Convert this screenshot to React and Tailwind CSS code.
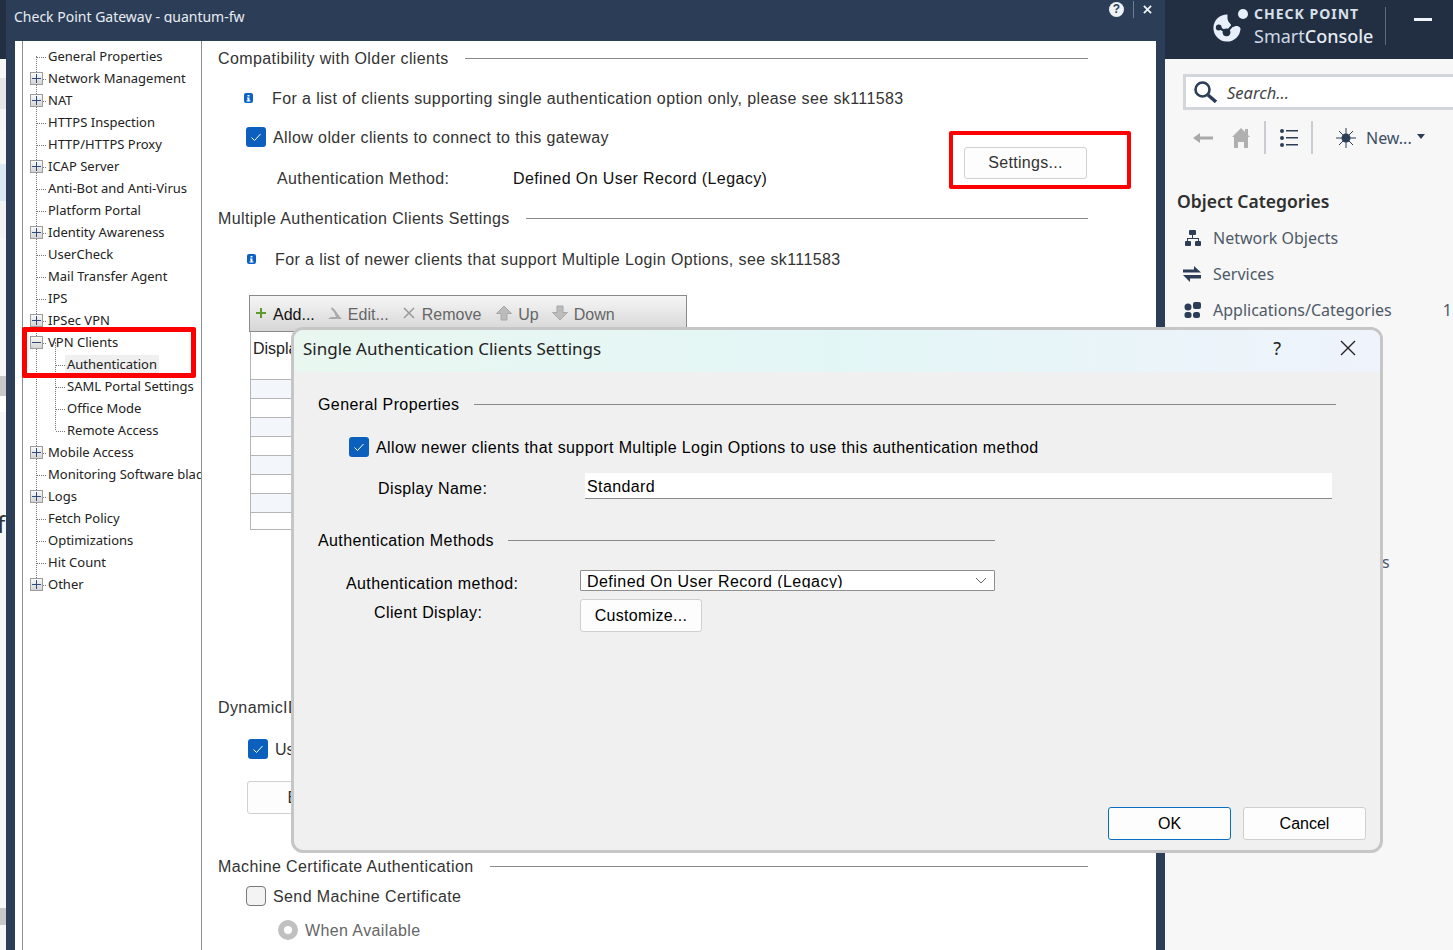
import React from 'react';

const ui = { fontFamily: '"Liberation Sans", Arial, sans-serif' };
const segoe = { fontFamily: '"Noto Sans", sans-serif' };

const treeItems = [
  { label: 'General Properties' },
  { label: 'Network Management', box: 'plus' },
  { label: 'NAT', box: 'plus' },
  { label: 'HTTPS Inspection' },
  { label: 'HTTP/HTTPS Proxy' },
  { label: 'ICAP Server', box: 'plus' },
  { label: 'Anti-Bot and Anti-Virus' },
  { label: 'Platform Portal' },
  { label: 'Identity Awareness', box: 'plus' },
  { label: 'UserCheck' },
  { label: 'Mail Transfer Agent' },
  { label: 'IPS' },
  { label: 'IPSec VPN', box: 'plus' },
  { label: 'VPN Clients', box: 'minus' },
  { label: 'Authentication', child: true, selected: true },
  { label: 'SAML Portal Settings', child: true },
  { label: 'Office Mode', child: true },
  { label: 'Remote Access', child: true },
  { label: 'Mobile Access', box: 'plus' },
  { label: 'Monitoring Software blade' },
  { label: 'Logs', box: 'plus' },
  { label: 'Fetch Policy' },
  { label: 'Optimizations' },
  { label: 'Hit Count' },
  { label: 'Other', box: 'plus' },
];

const Check = () => (
  <svg viewBox="0 0 20 20" className="w-5 h-5">
    <path d="M5.5 10.5l3 3 6-6.5" fill="none" stroke="#fff" strokeWidth="1" />
  </svg>
);

const Checkbox = ({ className = '' }) => (
  <div className={`w-5 h-5 shrink-0 rounded-[3px] bg-[#0b5fbd] ${className}`}>
    <Check />
  </div>
);

const InfoIcon = () => (
  <svg viewBox="0 0 9 10" className="w-[9px] h-[10px] shrink-0">
    <rect width="9" height="10" rx="2" fill="#0b62c4" />
    <path d="M3.500 2h2v1.500h-2zM3 4.500h2.500v3H6.500V8.500h-4V7.500H3.500V5.500H3z" fill="#fff" />
  </svg>
);

const Heading = ({ children, gap = 'gap-[16px]', color = 'text-[#333]' }) => (
  <div className={`flex items-center h-6 ${gap} text-[16px] tracking-[0.4px] whitespace-nowrap ${color}`}>
    <span className="pt-[2px]">{children}</span>
    <div className="flex-1 h-px bg-[#8a8a8a]" />
  </div>
);

const Expander = ({ type }) => (
  <div className="absolute left-[7px] top-[4px] w-[13px] h-[13px] border border-[#9c9c9c] bg-gradient-to-b from-[#fafafa] to-[#d4d4d4] flex items-center justify-center">
    <div className="relative w-[9px] h-[9px]">
      <div className="absolute left-0 top-[4px] w-[9px] h-px bg-[#2f4a7a]" />
      {type === 'plus' && <div className="absolute left-[4px] top-0 h-[9px] w-px bg-[#2f4a7a]" />}
    </div>
  </div>
);

const Tree = () => (
  <div className="relative w-[180px] shrink-0 overflow-hidden border-r border-[#8f8f8f] ml-[7px] pt-[5px] border-l border-l-[#8f8f8f]" style={segoe}>
    <div className="absolute left-[13px] top-[15px] h-[528px] border-l border-dotted border-[#777]" />
    <div className="absolute left-[32px] top-[301px] h-[88px] border-l border-dotted border-[#777]" />
    {treeItems.map((it) => (
      <div key={it.label} className="relative h-[22px] flex items-center text-[13px] text-[#222] whitespace-nowrap">
        <div className={`shrink-0 border-t border-dotted border-[#777] ${it.child ? 'ml-[33px] w-[9px]' : 'ml-[14px] w-[9px]'}`} />
        <span className={`${it.selected ? 'bg-[#f0f0f0] px-[2px]' : 'ml-[2px]'}`}>{it.label}</span>
        {it.box && <Expander type={it.box} />}
      </div>
    ))}
  </div>
);

const ToolIcon = ({ children, className = '' }) => (
  <svg viewBox="0 0 16 16" className={`w-4 h-4 shrink-0 ${className}`}>{children}</svg>
);

const TableToolbar = () => (
  <div className="w-[438px] h-[37px] ml-[31px] border border-[#8a8a8a] bg-gradient-to-b from-[#f6f6f6] to-[#d6d6d6] flex items-start pt-[7px] pl-[4px] text-[16px] text-[#666] whitespace-nowrap">
    <ToolIcon className="mt-[2px] -ml-px"><path d="M8 3v10M3 8h10" stroke="#5f9a2d" strokeWidth="2" /></ToolIcon>
    <span className="ml-[4px] text-[#111]">Add...</span>
    <ToolIcon className="ml-[12px] mt-[2px]"><path d="M1 14h14l-2-2-5-7-3-3-1 2 3 3 2 5H4z" fill="#aaa" /></ToolIcon>
    <span className="ml-[5px]">Edit...</span>
    <ToolIcon className="ml-[12px] mt-[2px]"><path d="M3 3l10 10M13 3L3 13" stroke="#999" strokeWidth="1.5" /></ToolIcon>
    <span className="ml-[5px]">Remove</span>
    <ToolIcon className="ml-[15px] mt-[2px]"><path d="M8 1l7.500 7.500H11V15H5V8.500H.5z" fill="#bcbcbc" stroke="#a8a8a8" /></ToolIcon>
    <span className="ml-[6px]">Up</span>
    <ToolIcon className="ml-[13px] mt-[2px]"><path d="M8 15L.5 7.500H5V1h6v6.500h4.500z" fill="#bcbcbc" stroke="#a8a8a8" /></ToolIcon>
    <span className="ml-[6px]">Down</span>
  </div>
);

const ClientTable = () => (
  <div className="w-[437px] ml-[32px] border border-t-0 border-[#b5b5b5] text-[16px] text-[#222]">
    <div className="h-[48px] pl-[2px] pt-[5px] border-b border-[#b5b5b5]">Display Name</div>
    {[0, 1, 2, 3, 4, 5, 6, 7].map((i) => (
      <div key={i} className={`border-b last:border-b-0 border-[#b5b5b5] ${i === 7 ? 'h-[16px]' : 'h-[19px]'} ${i % 2 === 0 ? 'bg-[#f3f7fc]' : 'bg-white'}`} />
    ))}
  </div>
);

const MainPanel = () => (
  <div className="flex-1 pt-[5px] pl-4 min-w-0 overflow-hidden" style={ui}>
    <div className="w-[870px]">
      <Heading>Compatibility with Older clients</Heading>
    </div>
    <div className="flex items-center h-6 mt-4 ml-[26px] text-[16px] text-[#333] tracking-[0.4px] whitespace-nowrap">
      <InfoIcon />
      <span className="ml-[19px] pt-[2px]">For a list of clients supporting single authentication option only, please see sk111583</span>
    </div>
    <div className="w-[870px] flex justify-between mt-[15px]">
      <div>
        <div className="flex items-center h-6 ml-[28px] text-[16px] text-[#333] tracking-[0.4px]">
          <Checkbox />
          <span className="ml-[7px] pt-[2px]">Allow older clients to connect to this gateway</span>
        </div>
        <div className="flex items-center h-6 mt-[17px] ml-[59px] text-[16px] tracking-[0.4px]">
          <span className="w-[236px] pt-[2px] text-[#333]">Authentication Method:</span>
          <span className="pt-[2px] text-[#111]">Defined On User Record (Legacy)</span>
        </div>
      </div>
      <div className="w-[123px] h-[32px] mt-[22px] mr-[1px] rounded-[3px] border border-[#d0d0d0] bg-[#fdfdfd] flex items-center justify-center text-[16px] text-[#333] tracking-[0.3px]">
        Settings...
      </div>
    </div>
    <div className="w-[870px] mt-4">
      <Heading>Multiple Authentication Clients Settings</Heading>
    </div>
    <div className="flex items-center h-6 mt-[17px] ml-[29px] text-[16px] text-[#333] tracking-[0.4px] whitespace-nowrap">
      <InfoIcon />
      <span className="ml-[19px] pt-[2px]">For a list of newer clients that support Multiple Login Options, see sk111583</span>
    </div>
    <div className="mt-6">
      <TableToolbar />
      <ClientTable />
    </div>
    <div className="w-[870px] mt-[165px]">
      <Heading>DynamicID Settings</Heading>
    </div>
    <div className="flex items-center h-6 mt-[18px] ml-[30px] text-[16px] text-[#333]">
      <Checkbox />
      <span className="ml-[7px] pt-[2px]">Use</span>
    </div>
    <div className="w-[122px] h-[33px] mt-[20px] ml-[29px] rounded-[3px] border border-[#d0d0d0] bg-[#fdfdfd] flex items-center justify-center text-[16px] text-[#333]">
      Edit...
    </div>
    <div className="w-[870px] mt-10">
      <Heading>Machine Certificate Authentication</Heading>
    </div>
    <div className="flex items-center h-6 mt-[6px] ml-[28px] text-[16px] text-[#333] tracking-[0.4px]">
      <div className="w-5 h-5 rounded-[4px] border border-[#777] bg-[#f3f3f3]" />
      <span className="ml-[7px] pt-[2px]">Send Machine Certificate</span>
    </div>
    <div className="flex items-center h-6 mt-[10px] ml-[60px] text-[16px] text-[#666] tracking-[0.4px]">
      <div className="w-5 h-5 rounded-full border-[6px] border-[#c0c0c0] bg-white" />
      <span className="ml-[7px] pt-[2px]">When Available</span>
    </div>
  </div>
);

const GatewayWindow = () => (
  <div className="w-[1159px] shrink-0 h-full flex flex-col bg-[#2c3e57]">
    <div className="h-[41px] shrink-0 relative">
      <div className="ml-2 pt-[8px] h-[23px] overflow-hidden text-[14px] leading-[18px] text-[#e8edf3]" style={segoe}>
        Check Point Gateway - quantum-fw
      </div>
      <div className="absolute right-[13px] top-0 flex items-center h-[19px]">
        <div className="w-[15px] h-[15px] rounded-full bg-[#eef2f7] text-[#2c3e57] text-[12px] font-bold leading-[15px] text-center" style={ui}>?</div>
        <div className="w-px h-[17px] bg-[#6d7d92] ml-[9px]" />
        <svg viewBox="0 0 10 10" className="w-[9px] h-[9px] ml-[9px]"><path d="M1 1l8 8M9 1L1 9" stroke="#eef2f7" strokeWidth="2" /></svg>
      </div>
    </div>
    <div className="flex-1 min-h-0 flex bg-white ml-[9px] mr-[9px]">
      <Tree />
      <MainPanel />
    </div>
  </div>
);

const Logo = () => (
  <svg viewBox="0 0 32 32" className="w-[31px] h-[31px] shrink-0 mt-[12px]">
    <path d="M17 2.5A14 14 0 1 0 30.5 17c-1-2-2.500-2.500-5-2.500-3.500 0-8-3-8.500-8 0-1.500 0-3 0-4z" fill="#e6effa" />
    <path d="M8 16l8 5 7-8" fill="none" stroke="#222f43" strokeWidth="2.400" />
    <circle cx="8" cy="16" r="3" fill="#222f43" />
    <circle cx="16" cy="21" r="4" fill="#222f43" />
    <circle cx="23" cy="13" r="2.500" fill="#222f43" />
  </svg>
);

const categories = [
  {
    label: 'Network Objects',
    icon: <g fill="#2c3e57"><rect x="6" y="1" width="7" height="5" rx="1" /><rect x="2" y="12" width="6" height="5" rx="1" /><rect x="12" y="12" width="6" height="5" rx="1" /><path d="M9 6h1v3h6v3h-1v-2H5v2H4V9h5z" /></g>,
  },
  {
    label: 'Services',
    icon: <g fill="#2c3e57"><path d="M0 4.500h11V1l7 6.500H0zM18 10H0l7 7v-3.500h11z" /></g>,
  },
  {
    label: 'Applications/Categories',
    icon: <g fill="#2c3e57"><circle cx="5" cy="6" r="3.500" /><rect x="10" y="1" width="8" height="7" rx="2" /><rect x="1.500" y="11" width="7" height="6" rx="2.500" /><rect x="10" y="11" width="7" height="6" rx="2.500" /></g>,
  },
];

const SmartConsole = () => (
  <div className="flex-1 min-w-0 h-full flex flex-col bg-[#f7f7f7] overflow-hidden" style={segoe}>
    <div className="h-[59px] shrink-0 bg-[#222f43] flex items-start pl-[46px]">
      <Logo />
      <div className="relative w-[132px] ml-[12px] shrink-0 border-r border-[#5b6a7e] mt-[7px] h-[38px] pr-[11px]">
        <div className="absolute left-[-16px] top-[2px] w-[10px] h-[10px] rounded-full bg-[#e6effa]" />
        <div className="-mt-px text-[14px] font-bold tracking-[1px] leading-[15px] text-[#d8e0ea] whitespace-nowrap">CHECK POINT</div>
        <div className="text-[18px] leading-[30px] text-[#cfd8e3] whitespace-nowrap">Smart<span className="font-medium text-[#e6ebf2]">Console</span></div>
      </div>
      <div className="w-[18px] h-[2.500px] bg-[#f0f3f7] ml-[28px] mt-[18px]" />
    </div>
    <div className="ml-[18px] mt-[15px] h-[36px] w-[300px] border-[3px] border-[#d3d7dc] bg-white flex items-center pl-[7px] shrink-0">
      <svg viewBox="0 0 24 24" className="w-[24px] h-[24px]"><circle cx="9.500" cy="9.500" r="7" fill="none" stroke="#2c3e57" strokeWidth="2.600" /><path d="M15 15l8 7" stroke="#2c3e57" strokeWidth="3.400" /></svg>
      <span className="ml-[10px] pt-[2px] italic text-[16.500px] text-[#444]">Search...</span>
    </div>
    <div className="flex items-center h-[33px] mt-[11px] ml-[28px] shrink-0">
      <svg viewBox="0 0 20 14" className="w-5 h-[14px]"><path d="M0 7l7-5v3.500h13v3H7V12z" fill="#a9a9a9" /></svg>
      <svg viewBox="0 0 18 20" className="w-[18px] h-5 ml-[19px]"><path d="M9 0l4 4V1h3v6l2 2h-2v11h-4v-6H6v6H2V9H0z" fill="#b0b0b0" /></svg>
      <div className="w-[2px] h-[33px] bg-[#c9cdd2] ml-[14px]" />
      <svg viewBox="0 0 18 18" className="w-[18px] h-[18px] ml-[14px]"><g fill="#2c3e57"><circle cx="2" cy="2" r="2" /><circle cx="2" cy="9" r="2" /><circle cx="2" cy="16" r="2" /><rect x="6" y="1" width="12" height="1.500" /><rect x="6" y="8" width="12" height="1.500" /><rect x="6" y="15" width="12" height="1.500" /></g></svg>
      <div className="w-[2px] h-[33px] bg-[#c9cdd2] ml-[13px]" />
      <svg viewBox="0 0 20 20" className="w-5 h-5 ml-[23px]"><circle cx="10" cy="10" r="4.500" fill="#2c3e57" /><path d="M10 0v20M0 10h20M3 3l14 14M17 3L3 17" stroke="#2c3e57" strokeWidth="1" /></svg>
      <span className="ml-[10px] text-[16px] text-[#3d4f66]">New...</span>
      <svg viewBox="0 0 8 5" className="w-2 h-[5px] ml-[5px] mb-[3px]"><path d="M0 0h8L4 5z" fill="#2c3e57" /></svg>
    </div>
    <div className="ml-[12px] mt-[35px] text-[17.500px] leading-6 font-semibold text-[#2f2f2f] whitespace-nowrap shrink-0">Object Categories</div>
    <div className="ml-[18px] mt-[7px] flex flex-col shrink-0">
      {categories.map((c) => (
        <div key={c.label} className="h-[36px] flex items-center whitespace-nowrap">
          <svg viewBox="0 0 19 18" className="w-[19px] h-[18px] shrink-0">{c.icon}</svg>
          <span className="ml-[11px] text-[16px] text-[#4e5a68]">{c.label}</span>
        </div>
      ))}
    </div>
  </div>
);

const DialogButton = ({ children, primary }) => (
  <div className={`w-[123px] h-[33px] rounded-[3px] border bg-[#fdfdfd] flex items-center justify-center text-[16px] text-black ${primary ? 'border-[#0a6fc2]' : 'border-[#cfcfcf]'}`}>
    {children}
  </div>
);

const Dialog = () => (
  <div className="absolute left-[291px] top-[327px] w-[1092px] h-[526px] rounded-[12px] border-[3px] border-[#c6c6c6] bg-[#f0f0f0] flex flex-col overflow-hidden" style={ui}>
    <div className="h-[42px] shrink-0 flex items-center pl-[9px] bg-gradient-to-r from-[#e9f7f0] via-[#e3f6f6] to-[#eff3fb]">
      <span className="pb-[4px] text-[17px] text-[#222]" style={segoe}>Single Authentication Clients Settings</span>
      <span className="ml-auto pb-[6px] text-[18px] text-[#222]" style={segoe}>?</span>
      <svg viewBox="0 0 16 16" className="w-4 h-4 ml-[59px] mr-[24px] mb-[6px]"><path d="M1 1l14 14M15 1L1 15" stroke="#222" strokeWidth="1.400" /></svg>
    </div>
    <div className="flex-1 min-h-0 flex flex-col pl-6 text-[16px] text-black">
      <div className="w-[1018px] mt-5">
        <Heading gap="gap-[14px]" color="text-black">General Properties</Heading>
      </div>
      <div className="flex items-center h-6 mt-[19px] ml-[31px] tracking-[0.4px] whitespace-nowrap">
        <Checkbox />
        <span className="ml-[7px] pt-[2px]">Allow newer clients that support Multiple Login Options to use this authentication method</span>
      </div>
      <div className="flex items-center h-[26px] mt-[14px] ml-[60px] tracking-[0.4px]">
        <span className="w-[207px] pt-[6px]">Display Name:</span>
        <div className="w-[747px] h-[26px] bg-white border-b border-[#8a8a8a] pl-[2px] leading-[28px]">Standard</div>
      </div>
      <div className="w-[677px] mt-[29px]">
        <Heading gap="gap-[14px]" color="text-black">Authentication Methods</Heading>
      </div>
      <div className="flex items-center h-[21px] mt-[18px] ml-[28px] tracking-[0.4px]">
        <span className="w-[234px] pt-[7px]">Authentication method:</span>
        <div className="relative w-[415px] h-[21px] rounded-[1px] border border-[#8f8f8f] bg-white pl-[6px]">
          <div className="h-[17px] overflow-hidden leading-[21px] tracking-[0.46px]">Defined On User Record (Legacy)</div>
          <svg viewBox="0 0 12 7" className="absolute right-[7px] top-[6px] w-3 h-[7px]"><path d="M1 1l5 5 5-5" fill="none" stroke="#666" strokeWidth="1" /></svg>
        </div>
      </div>
      <div className="flex items-start h-[33px] mt-2 ml-[56px] tracking-[0.4px]">
        <span className="w-[206px] pt-[2px]">Client Display:</span>
        <div className="w-[122px] h-[33px] rounded-[3px] border border-[#cfcfcf] bg-[#fdfdfd] flex items-center justify-center tracking-[0.3px]">Customize...</div>
      </div>
      <div className="mt-auto mb-[10px] mr-[14px] flex justify-end gap-3">
        <DialogButton primary>OK</DialogButton>
        <DialogButton>Cancel</DialogButton>
      </div>
    </div>
  </div>
);

const stripBands = [
  ['h-[59px]', 'bg-[#222f43]'],
  ['h-[19px]', 'bg-[#f7f7f7]'],
  ['h-[31px]', 'bg-[#e6e6e6]'],
  ['h-[21px]', 'bg-[#f5f5f5]'],
  ['h-[34px]', 'bg-[#f7f7f7]'],
  ['h-[37px]', 'bg-[#dce9f5]'],
  ['h-[37px]', 'bg-[#f3f3f3]'],
  ['h-[138px]', 'bg-[#f7f7f7]'],
  ['h-[20px]', 'bg-[#c8c8c8]'],
  ['h-[16px]', 'bg-white'],
  ['h-[496px]', 'bg-[#f7f7f7]'],
  ['h-[17px]', 'bg-[#c8c8c8]'],
  ['h-[25px]', 'bg-[#f7f7f7]'],
];

const BackStrip = () => (
  <div className="relative w-[6px] shrink-0 h-full overflow-hidden flex flex-col">
    {stripBands.map(([h, bg], i) => (
      <div key={i} className={`${h} ${bg}`} />
    ))}
    <span className="absolute left-[-3px] top-[510px] text-[24px] leading-7 text-[#333]" style={segoe}>f</span>
  </div>
);

export default function App() {
  return (
    <div className="relative w-[1453px] h-[950px] overflow-hidden flex bg-[#f7f7f7]">
      <BackStrip />
      <GatewayWindow />
      <SmartConsole />
      <span className="absolute right-[1px] top-[298px] text-[16px] text-[#4e5a68]" style={segoe}>1</span>
      <span className="absolute left-[1382px] top-[550px] text-[16px] text-[#4e5a68]" style={segoe}>s</span>
      {/* red highlight boxes drawn on the screenshot */}
      <div className="absolute left-[22px] top-[327px] w-[174px] h-[51px] border-[5px] border-[#f00] rounded-[2px]" />
      <div className="absolute left-[949px] top-[131px] w-[182px] h-[58px] border-[4px] border-[#f00] rounded-[2px]" />
      <Dialog />
    </div>
  );
}
